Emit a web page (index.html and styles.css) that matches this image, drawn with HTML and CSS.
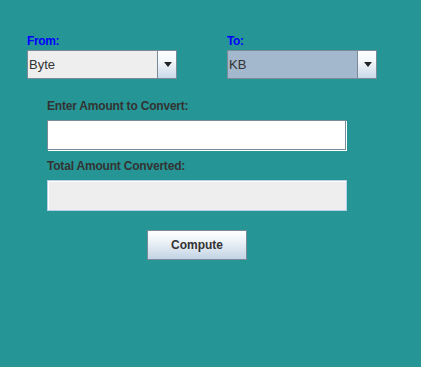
FILE: index.html
```html
<!DOCTYPE html>
<html lang="en">
<head>
    <meta charset="UTF-8">
    <title>Unit Converter</title>
    <link rel="stylesheet" href="styles.css">
</head>
<body>

    <div class="frame">
        <!-- Unit selectors -->
        <div class="selectors">
            <div class="selector">
                <div class="unit-label">From:</div>
                <div class="combo">
                    <div class="combo-value">Byte</div>
                    <div class="combo-arrow"><span class="arrow"></span></div>
                </div>
            </div>
            <div class="selector">
                <div class="unit-label">To:</div>
                <div class="combo combo-focused">
                    <div class="combo-value">KB</div>
                    <div class="combo-arrow"><span class="arrow"></span></div>
                </div>
            </div>
        </div>

        <!-- Amount section -->
        <div class="amounts">
            <div class="field-label">Enter Amount to Convert:</div>
            <input class="text-field" type="text">
            <div class="field-label">Total Amount Converted:</div>
            <input class="text-field readonly" type="text" readonly>
            <button class="compute-btn">Compute</button>
        </div>
    </div>

</body>
</html>
```

FILE: styles.css
```css
* {
    margin: 0;
    padding: 0;
    box-sizing: border-box;
    font-family: "Liberation Sans", Arial, sans-serif;
}

:root {
    --bg: #259695;
    --border: #7a8a99;
    --text: #333333;
    --control-bg: #eeeeee;
    --focus-bg: #a3b8cc;
}

body {
    background-color: var(--bg);
    width: 421px;
    height: 367px;
    overflow: hidden;
}

.frame {
    padding: 34px 0 0 27px;
}

/* Selectors */
.selectors {
    display: flex;
    gap: 50px;
}

.unit-label {
    color: #0000ff;
    font-size: 12px;
    font-weight: bold;
    line-height: 14px;
    letter-spacing: -0.4px;
    margin-bottom: 2px;
}

.combo {
    width: 150px;
    height: 29px;
    border: 1px solid var(--border);
    background-color: var(--control-bg);
    display: flex;
}

.combo-focused {
    background-color: var(--focus-bg);
}

.combo-value {
    flex: 1;
    display: flex;
    align-items: center;
    padding-left: 1px;
    font-size: 13px;
    color: var(--text);
}

.combo-arrow {
    width: 19px;
    border-left: 1px solid var(--border);
    background: linear-gradient(to bottom, #ffffff 0%, #f2f6fa 40%, #c9d9e8 100%);
    display: flex;
    align-items: center;
    justify-content: center;
}

.arrow {
    width: 0;
    height: 0;
    border-left: 4.5px solid transparent;
    border-right: 4.5px solid transparent;
    border-top: 5px solid #222222;
    margin-left: 1px;
}

/* Amount fields */
.amounts {
    display: flex;
    flex-direction: column;
    align-items: flex-start;
    margin: 20px 0 0 20px;
    width: 300px;
}

.field-label {
    color: var(--text);
    font-size: 12px;
    font-weight: bold;
    line-height: 14px;
    letter-spacing: -0.2px;
    margin-bottom: 7px;
}

.text-field {
    width: 299px;
    height: 30px;
    border: 1px solid var(--border);
    background-color: #ffffff;
    box-shadow: inset 1px 1px 0 #ffffff, 1px 1px 0 #ffffff;
    margin-bottom: 9px;
    outline: none;
}

.text-field.readonly {
    width: 300px;
    height: 31px;
    border-color: #b8cfe5;
    background-color: var(--control-bg);
    box-shadow: inset 1px 1px 0 #ffffff;
    margin-bottom: 19px;
}

.compute-btn {
    align-self: center;
    width: 100px;
    height: 30px;
    border: 1px solid var(--border);
    background: linear-gradient(to bottom, #ffffff 0%, #eef3f8 35%, #c3d4e5 100%);
    color: var(--text);
    font-size: 12px;
    font-weight: bold;
    cursor: pointer;
}
```
